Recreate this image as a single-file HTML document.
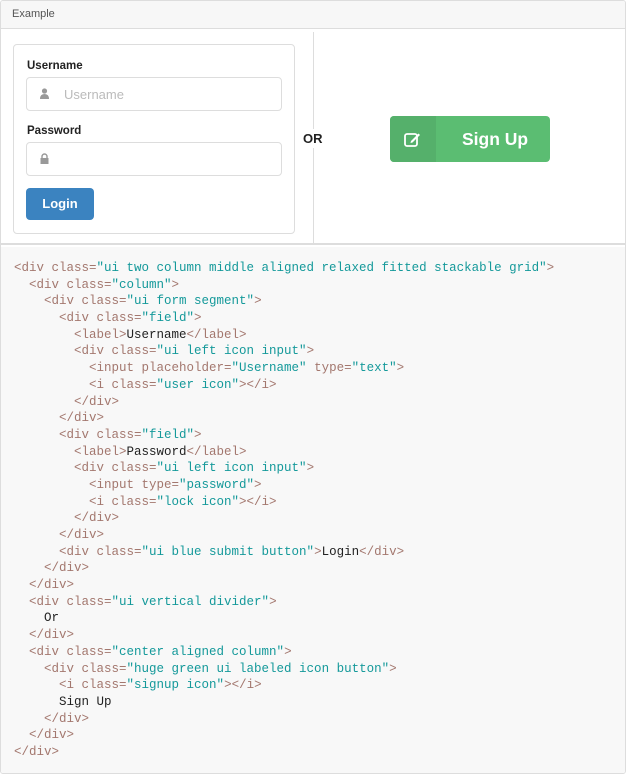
<!DOCTYPE html>
<html><head><meta charset="utf-8"><style>
*{box-sizing:border-box;margin:0;padding:0}
body{width:626px;height:774px;background:#fff;font-family:"Liberation Sans",sans-serif;overflow:hidden}
.wrap{position:absolute;left:0;top:0;width:626px;height:774px;border:1px solid #ddd;border-radius:3px;overflow:hidden}
.hdr{height:28px;background:#f7f7f7;border-bottom:1px solid #ddd;font-size:11px;color:#555;padding:7px 0 0 11px}
.ex{position:absolute;top:28px;left:0;right:0;height:216px;border-bottom:2px solid #ddd;background:#fff}
.seg{position:absolute;left:12px;top:15px;width:282px;height:190px;border:1px solid #ddd;border-radius:4px}
.lbl{position:absolute;left:13px;font-size:11.5px;font-weight:bold;color:#222}
.inp{position:absolute;left:12px;width:256px;height:34px;border:1px solid #ddd;border-radius:4px}
.ph{position:absolute;left:37px;top:9px;font-size:13px;color:#bbb}
.btn{position:absolute;left:12px;top:143px;width:68px;height:32px;background:#3b83c0;border-radius:4px;color:#fff;font-weight:bold;font-size:13px;text-align:center;line-height:32px}
.vl{position:absolute;left:312px;top:3px;width:1px;height:213px;background:#ddd}
.or{position:absolute;left:302px;top:100px;font-size:13px;font-weight:bold;color:#222;background:#fff;padding:2px 0}
.su{position:absolute;left:389px;top:87px;width:160px;height:46px;background:#5bbd72;border-radius:4px;color:#fff;font-weight:bold;font-size:17.5px;overflow:hidden}
.su .ic{position:absolute;left:0;top:0;width:46px;height:46px;background:#55b06b}
.su .t{position:absolute;left:72px;top:13px}
pre{position:absolute;left:13px;top:259px;font-family:"Liberation Mono",monospace;font-size:12.5px;line-height:16.69px;color:#222}
.code{position:absolute;top:246px;left:0;right:0;bottom:0;background:#f8f8f8}
.g{color:#a3776e}.v{color:#14999a}
</style></head><body><div class="wrap">
<div class="hdr">Example</div>
<div class="ex">
 <div class="seg">
  <div class="lbl" style="top:15px">Username</div>
  <div class="inp" style="top:32px"><svg style="position:absolute;left:12px;top:10px" width="11" height="11" viewBox="0 0 11 11"><circle cx="5.5" cy="3" r="2.6" fill="#999"/><path d="M1 11 Q1 6 5.5 6 Q10 6 10 11Z" fill="#999"/></svg><span class="ph">Username</span></div>
  <div class="lbl" style="top:80px">Password</div>
  <div class="inp" style="top:97px"><svg style="position:absolute;left:13px;top:10px" width="9" height="11" viewBox="0 0 9 11"><path d="M2 5V3.5a2.5 2.5 0 0 1 5 0V5" stroke="#999" stroke-width="1.4" fill="none"/><rect x="0.5" y="5" width="8" height="6" fill="#999"/></svg></div>
  <div class="btn">Login</div>
 </div>
 <div class="vl"></div>
 <div class="or">OR</div>
 <div class="su"><div class="ic"><svg style="position:absolute;left:14px;top:14px" width="18" height="18" viewBox="0 0 18 18"><rect x="1" y="4" width="12" height="12" rx="2" stroke="#fff" stroke-width="1.8" fill="none"/><path d="M7 11 L14.5 3.5 L16 5 L8.5 12.5 L6.5 13Z" fill="#fff"/></svg></div><span class="t">Sign Up</span></div>
</div>
<div class="code"></div>
<pre><span class="g">&lt;div class=</span><span class="v">"ui two column middle aligned relaxed fitted stackable grid"</span><span class="g">&gt;</span>
  <span class="g">&lt;div class=</span><span class="v">"column"</span><span class="g">&gt;</span>
    <span class="g">&lt;div class=</span><span class="v">"ui form segment"</span><span class="g">&gt;</span>
      <span class="g">&lt;div class=</span><span class="v">"field"</span><span class="g">&gt;</span>
        <span class="g">&lt;label&gt;</span>Username<span class="g">&lt;/label&gt;</span>
        <span class="g">&lt;div class=</span><span class="v">"ui left icon input"</span><span class="g">&gt;</span>
          <span class="g">&lt;input placeholder=</span><span class="v">"Username"</span> <span class="g">type=</span><span class="v">"text"</span><span class="g">&gt;</span>
          <span class="g">&lt;i class=</span><span class="v">"user icon"</span><span class="g">&gt;&lt;/i&gt;</span>
        <span class="g">&lt;/div&gt;</span>
      <span class="g">&lt;/div&gt;</span>
      <span class="g">&lt;div class=</span><span class="v">"field"</span><span class="g">&gt;</span>
        <span class="g">&lt;label&gt;</span>Password<span class="g">&lt;/label&gt;</span>
        <span class="g">&lt;div class=</span><span class="v">"ui left icon input"</span><span class="g">&gt;</span>
          <span class="g">&lt;input type=</span><span class="v">"password"</span><span class="g">&gt;</span>
          <span class="g">&lt;i class=</span><span class="v">"lock icon"</span><span class="g">&gt;&lt;/i&gt;</span>
        <span class="g">&lt;/div&gt;</span>
      <span class="g">&lt;/div&gt;</span>
      <span class="g">&lt;div class=</span><span class="v">"ui blue submit button"</span><span class="g">&gt;</span>Login<span class="g">&lt;/div&gt;</span>
    <span class="g">&lt;/div&gt;</span>
  <span class="g">&lt;/div&gt;</span>
  <span class="g">&lt;div class=</span><span class="v">"ui vertical divider"</span><span class="g">&gt;</span>
    Or
  <span class="g">&lt;/div&gt;</span>
  <span class="g">&lt;div class=</span><span class="v">"center aligned column"</span><span class="g">&gt;</span>
    <span class="g">&lt;div class=</span><span class="v">"huge green ui labeled icon button"</span><span class="g">&gt;</span>
      <span class="g">&lt;i class=</span><span class="v">"signup icon"</span><span class="g">&gt;&lt;/i&gt;</span>
      Sign Up
    <span class="g">&lt;/div&gt;</span>
  <span class="g">&lt;/div&gt;</span>
<span class="g">&lt;/div&gt;</span></pre>
</div></body></html>
